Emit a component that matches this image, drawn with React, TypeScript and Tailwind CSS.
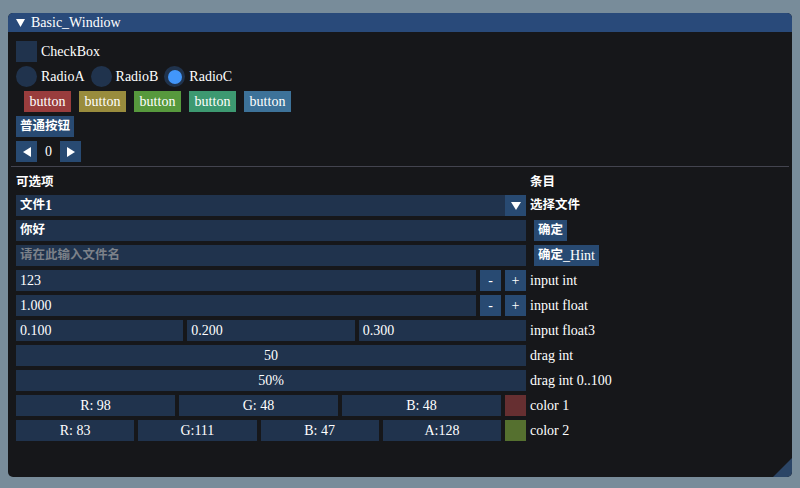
import type { ReactNode } from 'react';

const FIELD = 'bg-[#20334d]';
const BTN = 'bg-[#284a72]';

function Zh({ children }: { children: ReactNode }) {
  return <span className="text-[12.5px] font-bold">{children}</span>;
}

function Row({ label, children }: { label: ReactNode; children: ReactNode }) {
  return (
    <div className="flex h-[21px] items-stretch">
      <div className="flex w-[510px] shrink-0 gap-[4px]">{children}</div>
      <div className="flex items-center pl-[4px] whitespace-nowrap">{label}</div>
    </div>
  );
}

function Field({ children, center, muted }: { children?: ReactNode; center?: boolean; muted?: boolean }) {
  return (
    <div
      className={`flex flex-1 items-center ${FIELD} px-[4px] whitespace-nowrap ${center ? 'justify-center' : ''} ${
        muted ? 'text-[#7c8189]' : ''
      }`}
    >
      {children}
    </div>
  );
}

function Tri({ dir, className }: { dir: 'down' | 'left' | 'right'; className?: string }) {
  const pts = dir === 'down' ? '0,0 10,0 5,8' : dir === 'left' ? '8,0 8,10 0,5' : '0,0 0,10 8,5';
  const w = dir === 'down' ? 10 : 8;
  const h = dir === 'down' ? 8 : 10;
  return (
    <svg width={w} height={h} viewBox={`0 0 ${w} ${h}`} className={className}>
      <polygon points={pts} fill="#ffffff" />
    </svg>
  );
}

function Radio({ label, on }: { label: string; on?: boolean }) {
  return (
    <div className="flex items-center gap-[4px]">
      <div className={`flex h-[21px] w-[21px] items-center justify-center rounded-full ${FIELD}`}>
        {on && <div className="h-[14px] w-[14px] rounded-full bg-[#4296fa]" />}
      </div>
      <span>{label}</span>
    </div>
  );
}

const COLOR_BTNS = ['bg-[#993d3d]', 'bg-[#998c3d]', 'bg-[#57993d]', 'bg-[#3d9971]', 'bg-[#3d7299]'];

export default function App() {
  return (
    <div className="h-screen w-full overflow-hidden bg-[#788c9a] pt-[13px] pl-[8px] text-[14px] text-white font-['Liberation_Serif','Noto_Sans_CJK_SC',serif]">
      <div className="relative flex h-[464px] w-[784px] flex-col overflow-hidden rounded-[5px] bg-[#16171a]">
        {/* Title bar */}
        <div className="flex h-[19px] shrink-0 items-center gap-[6px] bg-[#294a7a] pl-[8px]">
          <svg width="9" height="8" viewBox="0 0 9 8" className="mt-[1px]">
            <polygon points="0,0 9,0 4.5,8" fill="#ffffff" />
          </svg>
          <span className="leading-none">Basic_Windiow</span>
        </div>

        {/* Content */}
        <div className="flex flex-col gap-[4px] px-[8px] pt-[9px]">
          <div className="flex h-[21px] items-center gap-[4px]">
            <div className={`h-[21px] w-[21px] ${FIELD}`} />
            <span>CheckBox</span>
          </div>

          <div className="flex h-[21px] items-center gap-[6px]">
            <Radio label="RadioA" />
            <Radio label="RadioB" />
            <Radio label="RadioC" on />
          </div>

          <div className="flex h-[21px] gap-[8px] pl-[8px]">
            {COLOR_BTNS.map((c, i) => (
              <div key={i} className={`flex w-[47px] items-center justify-center ${c}`}>
                button
              </div>
            ))}
          </div>

          <div className="flex h-[21px]">
            <div className={`flex items-center px-[4px] ${BTN}`}>
              <Zh>普通按钮</Zh>
            </div>
          </div>

          <div className="flex h-[21px] items-center gap-[8px]">
            <div className={`flex h-[21px] w-[21px] items-center justify-center ${BTN}`}>
              <Tri dir="left" />
            </div>
            <span className="w-[7px]">0</span>
            <div className={`flex h-[21px] w-[21px] items-center justify-center ${BTN}`}>
              <Tri dir="right" className="ml-[1px]" />
            </div>
          </div>

          <div className="-mx-[5px] h-px bg-[#43444f]" />

          <div className="flex h-[20px] items-center">
            <div className="w-[510px] shrink-0">
              <Zh>可选项</Zh>
            </div>
            <div className="pl-[4px]">
              <Zh>条目</Zh>
            </div>
          </div>

          <Row label={<Zh>选择文件</Zh>}>
            <div className={`flex flex-1 ${FIELD}`}>
              <div className="flex flex-1 items-center px-[4px]">
                <Zh>文件</Zh>
                <span className="font-bold">1</span>
              </div>
              <div className={`flex w-[21px] items-center justify-center ${BTN}`}>
                <Tri dir="down" />
              </div>
            </div>
          </Row>

          <Row
            label={
              <div className={`ml-[4px] flex h-full items-center px-[4px] ${BTN}`}>
                <Zh>确定</Zh>
              </div>
            }
          >
            <Field>
              <Zh>你好</Zh>
            </Field>
          </Row>

          <Row
            label={
              <div className={`ml-[4px] flex h-full items-center px-[4px] ${BTN}`}>
                <Zh>确定</Zh>
                <span>_Hint</span>
              </div>
            }
          >
            <Field muted>
              <span className="text-[12.5px] font-bold">请在此输入文件名</span>
            </Field>
          </Row>

          <Row label="input int">
            <Field>123</Field>
            <div className={`flex w-[21px] items-center justify-center ${BTN}`}>-</div>
            <div className={`flex w-[21px] items-center justify-center ${BTN}`}>+</div>
          </Row>

          <Row label="input float">
            <Field>1.000</Field>
            <div className={`flex w-[21px] items-center justify-center ${BTN}`}>-</div>
            <div className={`flex w-[21px] items-center justify-center ${BTN}`}>+</div>
          </Row>

          <Row label="input float3">
            <Field>0.100</Field>
            <Field>0.200</Field>
            <Field>0.300</Field>
          </Row>

          <Row label="drag int">
            <Field center>50</Field>
          </Row>

          <Row label="drag int 0..100">
            <Field center>50%</Field>
          </Row>

          <Row label="color 1">
            <Field center>R: 98</Field>
            <Field center>G: 48</Field>
            <Field center>B: 48</Field>
            <div className="w-[21px] bg-[#662f31]" />
          </Row>

          <Row label="color 2">
            <Field center>R: 83</Field>
            <Field center>G:111</Field>
            <Field center>B: 47</Field>
            <Field center>A:128</Field>
            <div className="w-[21px] bg-[#55702f]" />
          </Row>
        </div>

        {/* Resize grip */}
        <svg width="19" height="19" viewBox="0 0 19 19" className="absolute right-0 bottom-0">
          <polygon points="19,0 19,19 0,19" fill="#2b4566" />
        </svg>
      </div>
    </div>
  );
}
